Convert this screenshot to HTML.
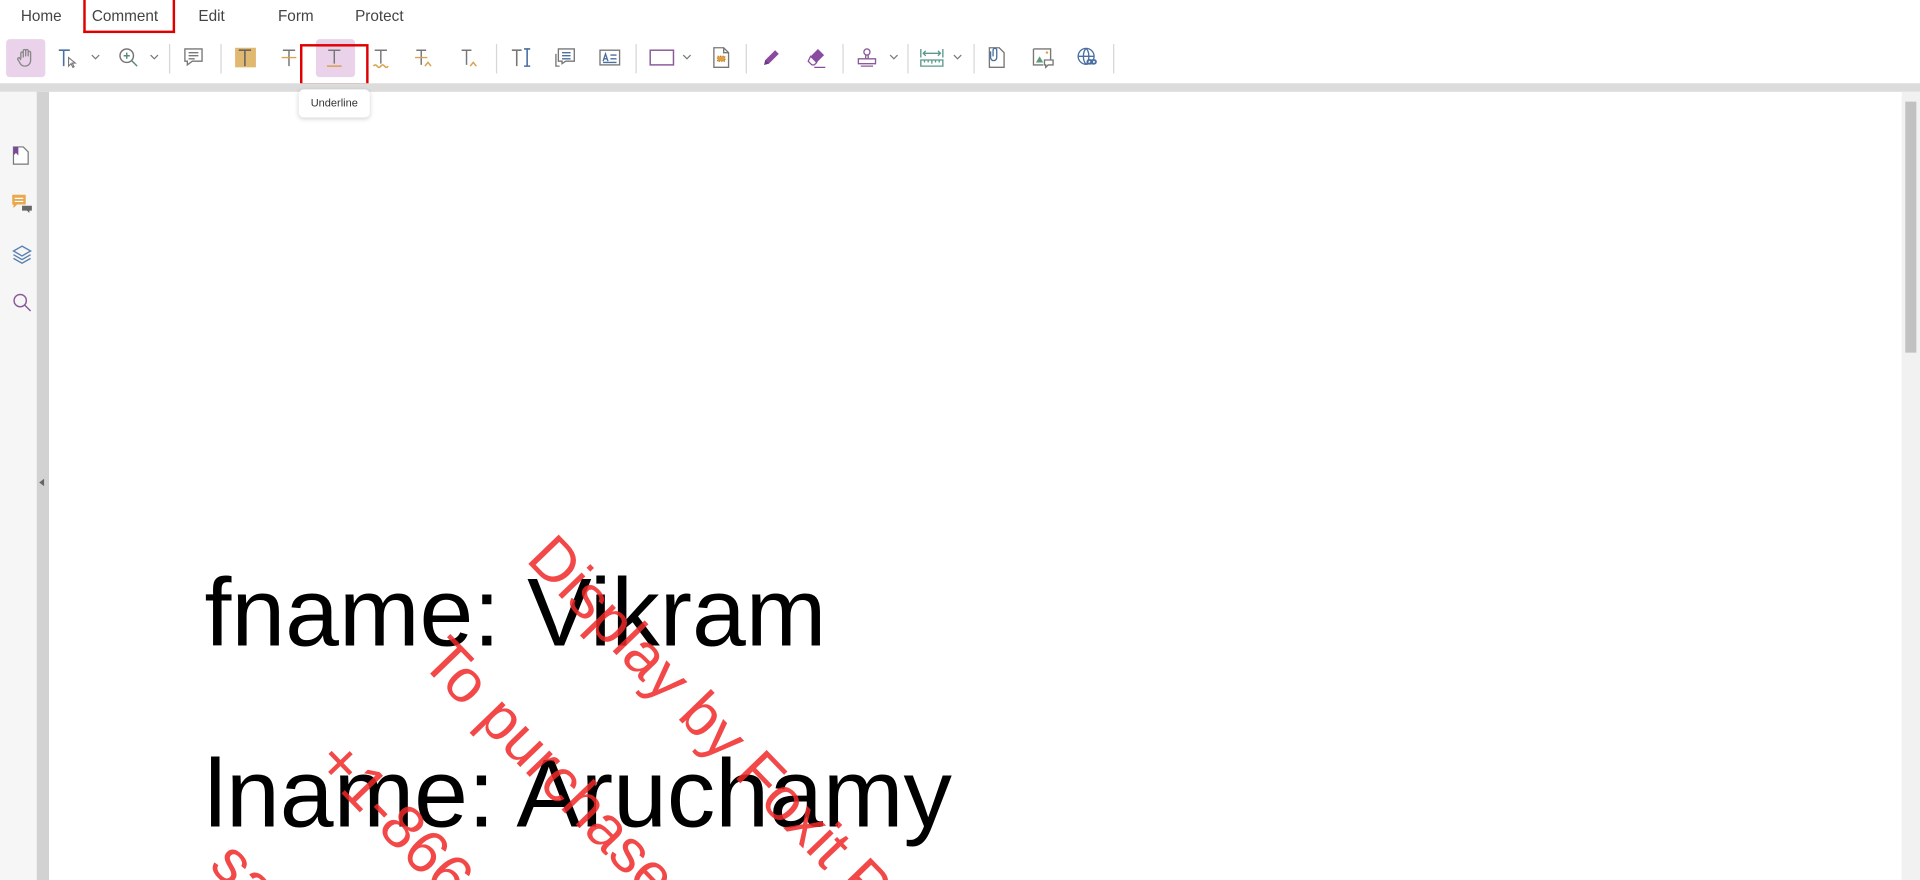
<!DOCTYPE html>
<html><head><meta charset="utf-8"><style>
html,body{margin:0;padding:0;width:1920px;height:880px;overflow:hidden;background:#fff;font-family:"Segoe UI","Liberation Sans",sans-serif}
#w{position:absolute;left:0;top:0;width:1568px;height:719px;transform:scale(1.22449);transform-origin:0 0;overflow:hidden;background:#fff}
.a{position:absolute}
.tab{position:absolute;top:6px;font-size:12.5px;color:#444}
.ic{position:absolute;top:38px;width:18px;height:18px}
.sep{position:absolute;top:36px;width:1px;height:24px;background:#d6d6d6}
.chev{position:absolute;top:44px;width:8px;height:6px}
</style></head><body><div id="w">
<div class="tab" style="left:17px">Home</div>
<div class="tab" style="left:75px">Comment</div>
<div class="tab" style="left:162px">Edit</div>
<div class="tab" style="left:227px">Form</div>
<div class="tab" style="left:290px">Protect</div>
<div class="a" style="left:68px;top:0;width:71px;height:25px;border:2px solid #e00000;border-top:none"></div>

<div class="a" style="left:5px;top:32px;width:32px;height:31px;background:#ead3ea;border-radius:3px"></div>
<div class="a" style="left:258px;top:32px;width:32px;height:31px;background:#ead3ea;border-radius:3px"></div>
<div class="a" style="left:245px;top:36px;width:52px;height:30px;border:2px solid #e00000"></div>

<svg class="ic" style="left:12px" viewBox="0 0 18 18" fill="none" stroke="#888" stroke-width="1.1"><path d="M5 10V5.5a1 1 0 0 1 2 0V9M7 8V3.5a1 1 0 0 1 2 0V8M9 8V3.5a1 1 0 0 1 2 0V8M11 8V5a1 1 0 0 1 2 0v6c0 3-2 5-4.5 5S5 15 4 13L2.5 10.5a1 1 0 0 1 1.7-1L5 11"/></svg>
<svg class="ic" style="left:46px" viewBox="0 0 18 18" fill="none" stroke="#4a6fa0" stroke-width="1.3"><path d="M2 3h9M6 3v13"/><path d="M10 9v7l2-2 1.5 3 1-.5-1.5-3h2.5z" stroke="#777" stroke-width="0.9"/></svg>
<svg class="chev" style="left:74px" viewBox="0 0 8 6" fill="none" stroke="#777"><path d="M1 1l3 3 3-3"/></svg>
<svg class="ic" style="left:96px" viewBox="0 0 18 18" fill="none" stroke="#777" stroke-width="1.2"><circle cx="7.5" cy="7.5" r="5.5"/><path d="M11.5 11.5L16 16M5 7.5h5M7.5 5v5" stroke="#5a8a7a"/></svg>
<svg class="chev" style="left:122px" viewBox="0 0 8 6" fill="none" stroke="#777"><path d="M1 1l3 3 3-3"/></svg>
<div class="sep" style="left:138px"></div>
<svg class="ic" style="left:149px" viewBox="0 0 18 18" fill="none" stroke="#777" stroke-width="1.1"><path d="M2 2h14v10H8l-4 3v-3H2z M5 5h8M5 7.5h8M5 10h5"/></svg>
<div class="sep" style="left:180px"></div>
<div class="a" style="left:192px;top:39px;width:17px;height:16px;background:#e0b870"></div>
<svg class="ic" style="left:191px" viewBox="0 0 18 18" fill="none" stroke="#666" stroke-width="1.3"><path d="M4 3h10M9 3v13"/></svg>
<svg class="ic" style="left:227px" viewBox="0 0 18 18" fill="none" stroke="#777" stroke-width="1.2"><path d="M4 3h10M9 3v13"/><path d="M3 9h12" stroke="#d9a24f"/></svg>
<svg class="ic" style="left:264px" viewBox="0 0 18 18" fill="none" stroke="#777" stroke-width="1.2"><path d="M4 3h10M9 3v11"/><path d="M3 16h12" stroke="#d9a24f"/></svg>
<svg class="ic" style="left:302px" viewBox="0 0 18 18" fill="none" stroke="#777" stroke-width="1.2"><path d="M4 3h10M9 3v11"/><path d="M3 16q1.5-2 3 0t3 0 3 0 3 0" stroke="#d9a24f"/></svg>
<svg class="ic" style="left:337px" viewBox="0 0 18 18" fill="none" stroke="#777" stroke-width="1.2"><path d="M3 3h8M7 3v12"/><path d="M2 9h10M10 16l2.5-3 2.5 3" stroke="#d9a24f"/></svg>
<svg class="ic" style="left:374px" viewBox="0 0 18 18" fill="none" stroke="#777" stroke-width="1.2"><path d="M3 3h8M7 3v12"/><path d="M10 16l2.5-3 2.5 3" stroke="#d9a24f"/></svg>
<div class="sep" style="left:405px"></div>
<svg class="ic" style="left:417px" viewBox="0 0 18 18" fill="none" stroke="#777" stroke-width="1.3"><path d="M1 3h8M5 3v13"/><path d="M11 2h5M13.5 2v14M11 16h5" stroke="#4a6fa0"/></svg>
<svg class="ic" style="left:452px" viewBox="0 0 18 18" fill="none" stroke="#777" stroke-width="1.1"><path d="M4 2h13v10H10l-3 2v-2H4z"/><path d="M7 5h7M7 7.5h7M7 10h7" stroke="#4a6fa0"/><path d="M2 6v10h3" /></svg>
<svg class="ic" style="left:489px" viewBox="0 0 18 18" fill="none" stroke="#777" stroke-width="1.1"><rect x="1" y="3" width="16" height="12"/><path d="M3.5 12l2-6 2 6M4.2 10h2.6M9.5 7h5M9.5 10h5M3.5 13h11" stroke="#4a6fa0"/></svg>
<div class="sep" style="left:519px"></div>
<svg class="ic" style="left:530px;width:21px" viewBox="0 0 21 18" fill="none" stroke="#8a5a9a" stroke-width="1.2"><rect x="1" y="3" width="19" height="12"/></svg>
<svg class="chev" style="left:557px" viewBox="0 0 8 6" fill="none" stroke="#777"><path d="M1 1l3 3 3-3"/></svg>
<svg class="ic" style="left:580px" viewBox="0 0 18 18" fill="none" stroke="#777" stroke-width="1.1"><path d="M3 1h8l4 4v12H3z M11 1v4h4"/><rect x="6" y="8" width="6" height="4" fill="#e0a040" stroke="#c08030" stroke-dasharray="1 1"/></svg>
<div class="sep" style="left:609px"></div>
<svg class="ic" style="left:621px" viewBox="0 0 18 18"><path d="M3 15l1-4 8-8 3 3-8 8z" fill="#8a4aa0"/><path d="M3 15l1-4 3 3z" fill="#6a3a80"/></svg>
<svg class="ic" style="left:658px" viewBox="0 0 18 18"><path d="M10 2l5 5-6 6-5-5z" fill="#8a4aa0"/><path d="M4 8l5 5-2 2H5l-3-3z" fill="none" stroke="#8a4aa0" stroke-width="1"/><path d="M7 17h9" stroke="#8a4aa0"/></svg>
<div class="sep" style="left:688px"></div>
<svg class="ic" style="left:699px" viewBox="0 0 18 18" fill="none" stroke="#8a5a9a" stroke-width="1.1"><circle cx="9" cy="4.5" r="2.5"/><path d="M8 7v3M10 7v3M2 10h14v4H2zM4 16h10"/></svg>
<svg class="chev" style="left:726px" viewBox="0 0 8 6" fill="none" stroke="#777"><path d="M1 1l3 3 3-3"/></svg>
<div class="sep" style="left:741px"></div>
<svg class="ic" style="left:751px;width:20px" viewBox="0 0 20 18" fill="none" stroke="#5a9a8a" stroke-width="1.1"><path d="M1 2v7M19 2v7M3 5.5h14M5 3.5l-2 2 2 2M15 3.5l2 2-2 2M1 11h18v5H1zM4 11v2M7 11v2M10 11v3M13 11v2M16 11v2"/></svg>
<svg class="chev" style="left:778px" viewBox="0 0 8 6" fill="none" stroke="#777"><path d="M1 1l3 3 3-3"/></svg>
<div class="sep" style="left:795px"></div>
<svg class="ic" style="left:805px" viewBox="0 0 18 18" fill="none" stroke="#777" stroke-width="1.1"><path d="M3 1h8l4 4v12H3z"/><path d="M6 8V3a1.5 1.5 0 0 1 3 0v6a2.5 2.5 0 0 1-5 0V4" stroke="#4a6fa0"/></svg>
<svg class="ic" style="left:843px" viewBox="0 0 18 18" fill="none" stroke="#777" stroke-width="1.1"><path d="M1 2h14v9M1 2v13h8"/><path d="M3 13l3-5 3 5z" fill="#5a9a7a" stroke="none"/><circle cx="12" cy="5" r="1" fill="#e0a040" stroke="none"/><path d="M10 11h7v4h-4l-2 2v-2h-1z"/></svg>
<svg class="ic" style="left:879px" viewBox="0 0 18 18" fill="none" stroke="#4a6fa0" stroke-width="1.1"><circle cx="8" cy="8" r="6.5"/><path d="M1.5 8h13M8 1.5c-3 3-3 10 0 13M8 1.5c3 3 3 10 0 13"/><rect x="9" y="11" width="4" height="3" rx="1.5" stroke-width="1.5"/><rect x="12" y="11" width="4" height="3" rx="1.5" stroke-width="1.5"/></svg>
<div class="sep" style="left:909px"></div>

<div class="a" style="left:0;top:68px;width:1568px;height:7px;background:#dcdcdc"></div>
<div class="a" style="left:244px;top:73px;width:58px;height:23px;background:#fff;border-radius:4px;box-shadow:0 1px 4px rgba(0,0,0,.18);font-size:9px;color:#333;text-align:center;line-height:23px;z-index:3">Underline</div>

<div class="a" style="left:0;top:75px;width:30px;height:644px;background:#f6f6f6"></div>
<div class="a" style="left:30px;top:75px;width:10px;height:644px;background:#d2d2d2"></div>
<div class="a" style="left:32px;top:391px;width:0;height:0;border-top:3px solid transparent;border-bottom:3px solid transparent;border-right:4px solid #666"></div>
<svg class="a" style="left:10px;top:119px" width="14" height="16" viewBox="0 0 14 16"><path d="M1 1h8l4 4v10H1z" fill="#fff" stroke="#777"/><path d="M1 1h4v7l-2-2-2 2z" fill="#7a4a9a"/></svg>
<svg class="a" style="left:9px;top:158px" width="18" height="18" viewBox="0 0 18 18"><path d="M1 1h11v8H5l-3 3v-3H1z" fill="#e8a850"/><path d="M3 4h7M3 6.5h7" stroke="#fff"/><path d="M9 10h8v4h-2v2l-2-2H9z" fill="#666"/></svg>
<svg class="a" style="left:9px;top:199px" width="18" height="18" viewBox="0 0 18 18" fill="none" stroke="#5a80b0" stroke-width="1.1"><path d="M9 2l7 4-7 4-7-4zM2 9l7 4 7-4M2 12l7 4 7-4"/></svg>
<svg class="a" style="left:10px;top:239px" width="16" height="16" viewBox="0 0 16 16" fill="none" stroke="#8a5a9a" stroke-width="1.2"><circle cx="6.5" cy="6.5" r="5"/><path d="M10 10l5 5"/></svg>

<div class="a" style="left:1553px;top:75px;width:15px;height:644px;background:#f1f1f1"></div>
<div class="a" style="left:1556px;top:83px;width:9px;height:205px;background:#c1c1c1"></div>

<div class="a" style="left:167px;top:450px;font-family:'Liberation Sans',sans-serif;font-size:79px;color:#000;line-height:100px;white-space:nowrap">fname: Vikram</div>
<div class="a" style="left:167px;top:598px;font-family:'Liberation Sans',sans-serif;font-size:79px;color:#000;line-height:100px;white-space:nowrap">lname: Aruchamy</div>

<div class="a" style="left:484px;top:404px;transform:rotate(46deg);transform-origin:0 0;font-family:'Liberation Sans',sans-serif;font-size:50px;line-height:120px;color:rgba(240,40,40,.85);white-space:nowrap">Display by Foxit PDF SDK<br>To purchase, contact<br>+1-866-680-3668<br>sales@foxitsoftware.com</div>
</div></body></html>
